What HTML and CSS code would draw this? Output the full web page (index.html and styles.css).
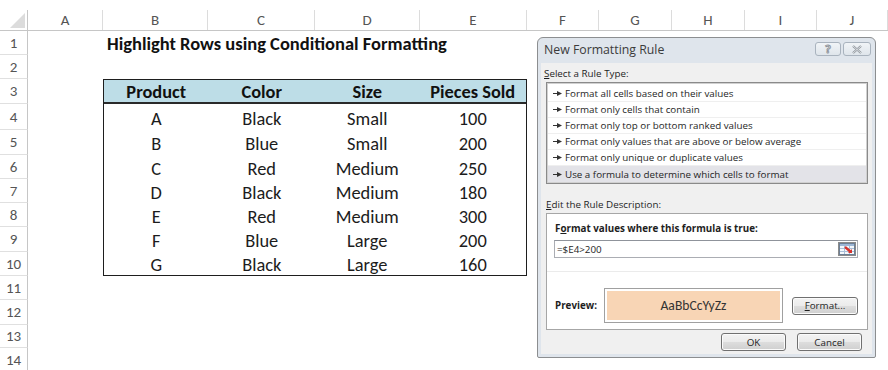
FILE: index.html
```html
<!DOCTYPE html>
<html>
<head>
<meta charset="utf-8">
<link rel="stylesheet" href="styles.css">
</head>
<body>
<div class="topgap"></div>
<div class="colheads">
  <div class="corner"><svg width="17" height="17" viewBox="0 0 17 17"><polygon points="16,1 16,16 1,16" fill="#dcdcdc"/></svg></div>
  <div class="ch">A</div><div class="ch">B</div><div class="ch">C</div><div class="ch">D</div><div class="ch">E</div>
  <div class="ch">F</div><div class="ch">G</div><div class="ch">H</div><div class="ch">I</div><div class="ch">J</div>
</div>
<div class="grid">
  <div class="rh">1</div><div class="rh">2</div><div class="rh">3</div><div class="rh">4</div><div class="rh">5</div>
  <div class="rh">6</div><div class="rh">7</div><div class="rh">8</div><div class="rh">9</div><div class="rh">10</div>
  <div class="rh">11</div><div class="rh">12</div><div class="rh">13</div><div class="rh">14</div>
  <div class="title">Highlight Rows using Conditional Formatting</div>
  <div class="tbl">
    <div class="th">Product</div><div class="th">Color</div><div class="th">Size</div><div class="th">Pieces Sold</div>
    <div class="td">A</div><div class="td">Black</div><div class="td">Small</div><div class="td">100</div>
    <div class="td">B</div><div class="td">Blue</div><div class="td">Small</div><div class="td">200</div>
    <div class="td">C</div><div class="td">Red</div><div class="td">Medium</div><div class="td">250</div>
    <div class="td">D</div><div class="td">Black</div><div class="td">Medium</div><div class="td">180</div>
    <div class="td">E</div><div class="td">Red</div><div class="td">Medium</div><div class="td">300</div>
    <div class="td">F</div><div class="td">Blue</div><div class="td">Large</div><div class="td">200</div>
    <div class="td">G</div><div class="td">Black</div><div class="td">Large</div><div class="td">160</div>
  </div>
</div>

<div class="dlg">
  <div class="titlebar">
    <span class="dtitle">New Formatting Rule</span>
    <span class="tbtn help">?</span>
    <span class="tbtn close"><svg width="12" height="9" viewBox="0 0 12 9"><path d="M2 1 L10 8 M10 1 L2 8" stroke="#8d939a" stroke-width="2.2" fill="none"/><path d="M2 1 L10 8 M10 1 L2 8" stroke="#eef1f4" stroke-width="0.8" fill="none"/></svg></span>
  </div>
  <div class="client">
    <div class="lbl"><u>S</u>elect a Rule Type:</div>
    <div class="list">
      <div class="item"><svg class="arr" width="9" height="5" viewBox="0 0 9 5"><path d="M0 2.5 H5" stroke="#333" stroke-width="1"/><path d="M4 0 L9 2.5 L4 5 Z" fill="#333"/></svg>Format all cells based on their values</div>
      <div class="item"><svg class="arr" width="9" height="5" viewBox="0 0 9 5"><path d="M0 2.5 H5" stroke="#333" stroke-width="1"/><path d="M4 0 L9 2.5 L4 5 Z" fill="#333"/></svg>Format only cells that contain</div>
      <div class="item"><svg class="arr" width="9" height="5" viewBox="0 0 9 5"><path d="M0 2.5 H5" stroke="#333" stroke-width="1"/><path d="M4 0 L9 2.5 L4 5 Z" fill="#333"/></svg>Format only top or bottom ranked values</div>
      <div class="item"><svg class="arr" width="9" height="5" viewBox="0 0 9 5"><path d="M0 2.5 H5" stroke="#333" stroke-width="1"/><path d="M4 0 L9 2.5 L4 5 Z" fill="#333"/></svg>Format only values that are above or below average</div>
      <div class="item"><svg class="arr" width="9" height="5" viewBox="0 0 9 5"><path d="M0 2.5 H5" stroke="#333" stroke-width="1"/><path d="M4 0 L9 2.5 L4 5 Z" fill="#333"/></svg>Format only unique or duplicate values</div>
      <div class="item sel"><svg class="arr" width="9" height="5" viewBox="0 0 9 5"><path d="M0 2.5 H5" stroke="#333" stroke-width="1"/><path d="M4 0 L9 2.5 L4 5 Z" fill="#333"/></svg>Use a formula to determine which cells to format</div>
    </div>
    <div class="lbl lbl2"><u>E</u>dit the Rule Description:</div>
    <div class="panel">
      <div class="plbl">F<u>o</u>rmat values where this formula is true:</div>
      <div class="input">
        <span class="formula">=$E4&gt;200</span>
        <span class="rng"><svg width="16" height="12" viewBox="0 0 16 12">
          <rect x="0.5" y="0.5" width="15" height="11" fill="#f4f8fc" stroke="#6d7f95"/>
          <rect x="1" y="1" width="14" height="2" fill="#9db7d6"/>
          <path d="M1 5.5 H15 M1 8.5 H15 M5.5 3 V11 M10.5 3 V11" stroke="#a9bfd8" stroke-width="1"/>
          <path d="M6 4 L12 9" stroke="#d7322b" stroke-width="2.4"/>
          <path d="M9 10 L13 10 L13 6 Z" fill="#d7322b"/>
        </svg></span>
      </div>
      <div class="sep"></div>
      <div class="prow">
        <span class="plbl2">Preview:</span>
        <div class="pbox"><span>AaBbCcYyZz</span></div>
        <span class="btn fmt"><u>F</u>ormat...</span>
      </div>
    </div>
    <div class="btns">
      <span class="btn">OK</span>
      <span class="btn">Cancel</span>
    </div>
  </div>
</div>
</body>
</html>
```

FILE: styles.css
```css
:root {
  --cols: 28px 75px 105px 107px 105px 107px 72px 73px 73px 72px 71px;
}
html, body {
  margin: 0;
  padding: 0;
}
body {
  width: 888px;
  height: 370px;
  overflow: hidden;
  background: #fff;
  position: relative;
  font-family: Carlito, Calibri, Lato, sans-serif;
  color: #1c1c1c;
}
.topgap {
  height: 10px;
}
.colheads {
  display: grid;
  grid-template-columns: var(--cols);
  height: 21px;
  box-sizing: border-box;
  border-bottom: 1px solid #c6c6c6;
}
.corner {
  border-right: 1px solid #c6c6c6;
  display: flex;
  align-items: flex-end;
  justify-content: flex-end;
  padding: 0 1px 1px 0;
}
.corner svg {
  display: block;
}
.ch {
  text-align: center;
  font-size: 15px;
  line-height: 20px;
  color: #555;
  border-right: 1px solid #dcdcdc;
}
.grid {
  display: grid;
  grid-template-columns: var(--cols);
  grid-template-rows: 24px 24px 25px 26px 25px 24px 24px 24px 25px 24px 24px 25px 23px 24px;
}
.rh {
  grid-column: 1;
  box-sizing: border-box;
  border-right: 1px solid #c6c6c6;
  border-bottom: 1px solid #e0e0e0;
  text-align: center;
  font-size: 15px;
  color: #555;
  display: flex;
  align-items: center;
  justify-content: center;
}
.title {
  grid-column: 3 / 12;
  grid-row: 1;
  font-weight: bold;
  font-size: 18.5px;
  padding-left: 4px;
  display: flex;
  align-items: center;
  white-space: nowrap;
  color: #111;
}
.tbl {
  grid-column: 3 / 7;
  grid-row: 3 / 11;
  box-sizing: border-box;
  border: 1px solid #1e1e1e;
  display: grid;
  grid-template-columns: 105fr 107fr 105fr 107fr;
  grid-template-rows: 24px 26px 25px 24px 24px 24px 25px 23px;
}
.th {
  background: #bddde7;
  font-weight: bold;
  font-size: 18.4px;
  display: flex;
  align-items: center;
  justify-content: center;
  border-bottom: 2px solid #2a2a2a;
  box-sizing: border-box;
  color: #111;
}
.td {
  font-size: 18.4px;
  display: flex;
  align-items: center;
  justify-content: center;
  padding-top: 2px;
  box-sizing: border-box;
  color: #1c1c1c;
}

/* dialog */
.dlg {
  position: absolute;
  left: 537px;
  top: 37px;
  width: 339px;
  height: 321px;
  box-sizing: border-box;
  border: 1px solid #8c8e90;
  border-radius: 6px 6px 2px 2px;
  background: #dfe5ec;
  padding: 0 3px 3px;
  display: flex;
  flex-direction: column;
  font-family: "Open Sans", "Noto Sans", sans-serif;
  color: #1e1e1e;
}
.titlebar {
  height: 25px;
  flex: none;
  display: flex;
  align-items: flex-start;
  padding-left: 3px;
}
.dtitle {
  font-size: 12.3px;
  line-height: 16px;
  margin-top: 4px;
  color: #3b3b3b;
  flex: 1;
}
.tbtn {
  margin-top: 4px;
  height: 14px;
  box-sizing: border-box;
  border: 1px solid #a9b3be;
  border-radius: 3px;
  background: linear-gradient(#f1f4f7, #dfe5eb);
  display: flex;
  align-items: center;
  justify-content: center;
}
.help {
  width: 26px;
  font-size: 11px;
  font-weight: bold;
  color: #eef1f4;
  -webkit-text-stroke: 0.9px #8d939a;
  line-height: 12px;
}
.close {
  width: 28px;
  margin-left: 2px;
  margin-right: 1px;
}
.close svg {
  display: block;
}
.client {
  flex: 1;
  background: #f0f0f0;
  padding: 4px 4px 0 5px;
  display: flex;
  flex-direction: column;
}
.lbl {
  font-size: 9.8px;
  line-height: 14px;
  height: 14px;
  margin-left: -2px;
  color: #1e1e1e;
}
.lbl2 {
  margin-top: 14px;
  margin-left: 0;
}
.list {
  margin-top: 1px;
  height: 102px;
  box-sizing: border-box;
  border: 1px solid #8a8a8a;
  box-shadow: inset 0 0 0 1px #d0d0d0;
  background: #fff;
  padding: 3px 1px 0;
}
.item {
  height: 16px;
  box-sizing: border-box;
  border-bottom: 1px solid #efefef;
  font-size: 9.8px;
  line-height: 15px;
  padding-left: 5px;
  display: flex;
  align-items: center;
  white-space: nowrap;
}
.item.sel {
  background: #e3e3e8;
  border-bottom: none;
}
.arr {
  margin-right: 3px;
  flex: none;
}
.panel {
  margin-top: 1px;
  height: 117px;
  box-sizing: border-box;
  border: 1px solid #a6a6a6;
  background: #fff;
  padding: 8px 9px 0 7px;
  display: flex;
  flex-direction: column;
}
.plbl {
  font-size: 9.8px;
  font-weight: bold;
  line-height: 14px;
  margin-left: 1px;
}
.input {
  margin-top: 4px;
  height: 18px;
  box-sizing: border-box;
  border: 1px solid #abadb3;
  border-top-color: #8f939b;
  display: flex;
  align-items: center;
  justify-content: space-between;
  padding: 0 1px 0 2px;
}
.formula {
  font-size: 9.8px;
}
.rng {
  width: 18px;
  height: 14px;
  box-sizing: border-box;
  border: 1px solid #8a8a8a;
  background: #e9edf2;
  display: flex;
  align-items: center;
  justify-content: center;
}
.rng svg {
  display: block;
}
.sep {
  margin: 13px -9px 0 -7px;
  height: 1px;
  background: #ebebeb;
}
.prow {
  margin-top: 16px;
  display: flex;
  align-items: center;
}
.plbl2 {
  font-size: 9.8px;
  font-weight: bold;
  width: 49px;
  margin-left: 1px;
}
.pbox {
  width: 179px;
  height: 35px;
  box-sizing: border-box;
  border: 1px solid #a0a0a0;
  padding: 2px;
  background: #fff;
}
.pbox span {
  display: flex;
  height: 100%;
  align-items: center;
  justify-content: center;
  background: #f8d5b5;
  font-family: Carlito, Calibri, Lato, sans-serif;
  font-size: 13.6px;
  color: #333;
}
.btn {
  width: 65px;
  height: 18px;
  box-sizing: border-box;
  border: 1px solid #707070;
  border-radius: 3px;
  background: linear-gradient(#f3f3f3 0%, #ebebeb 48%, #dddddd 52%, #cfcfcf 100%);
  box-shadow: inset 0 0 0 1px #fbfbfb;
  display: flex;
  align-items: center;
  justify-content: center;
  font-size: 9.8px;
  color: #1e1e1e;
}
.fmt {
  width: 66px;
  margin-left: 9px;
}
.btns {
  margin-top: 3px;
  display: flex;
  justify-content: flex-end;
  gap: 11px;
  padding-right: 6px;
}
```
